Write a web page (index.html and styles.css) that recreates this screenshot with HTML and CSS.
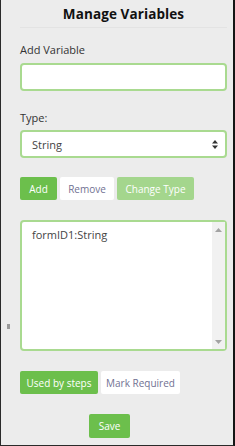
FILE: index.html
```html
<!DOCTYPE html>
<html>
<head>
<meta charset="utf-8">
<link rel="stylesheet" href="styles.css">
</head>
<body>
<div class="frame">
  <h1 class="title">Manage Variables</h1>
  <div class="sep"></div>
  <label class="label lbl-add">Add Variable</label>
  <div class="input"></div>
  <label class="label lbl-type">Type:</label>
  <div class="select">
    <span>String</span>
    <svg class="updown" width="6" height="9" viewBox="0 0 6 9"><path d="M3 0 L6 3.5 H0 Z M3 9 L6 5.5 H0 Z" fill="#333"/></svg>
  </div>
  <div class="btnrow row1">
    <span class="btn green">Add</span>
    <span class="btn white">Remove</span>
    <span class="btn pale">Change Type</span>
  </div>
  <div class="listbox">
    <div class="listtext">formID1:String</div>
    <div class="scroll">
      <svg width="7" height="4" viewBox="0 0 7 4"><path d="M3.5 0 L7 4 H0 Z" fill="#a3a3a3"/></svg>
      <svg width="7" height="4" viewBox="0 0 7 4"><path d="M0 0 H7 L3.5 4 Z" fill="#a3a3a3"/></svg>
    </div>
  </div>
  <div class="btnrow row2">
    <span class="btn green">Used by steps</span>
    <span class="btn white">Mark Required</span>
  </div>
  <div class="saverow">
    <span class="btn green save">Save</span>
  </div>
  <span class="grip"></span>
</div>
</body>
</html>
```
FILE: styles.css
```css
* { box-sizing: border-box; }
html, body { margin: 0; padding: 0; background: #ececec; }
.frame {
  position: relative;
  width: 235px;
  height: 446px;
  background: #ececec;
  border-left: 1px solid #2a2a2a;
  border-right: 2px solid #151515;
  border-bottom: 1px solid #2a2a2a;
  padding: 0 6px 0 19px;
  font-family: "Open Sans", "Liberation Sans", sans-serif;
  color: #333;
  display: flex;
  flex-direction: column;
}
.title {
  margin: 5px 0 0 0;
  height: 18px;
  line-height: 18px;
  font-size: 13.5px;
  font-weight: 700;
  text-align: center;
  color: #111;
  letter-spacing: 0.1px;
}
.sep {
  margin-top: 4px;
  height: 1px;
  background: #d3d3d3;
  border-bottom: 1px solid #e3e3e3;
}
.label {
  font-size: 11px;
  line-height: 14px;
  color: #333;
  display: block;
}
.lbl-add { margin-top: 15px; }
.input {
  margin-top: 6px;
  height: 28px;
  background: #fff;
  border: 2px solid #a9da90;
  border-radius: 4px;
}
.lbl-type { margin-top: 20px; }
.select {
  margin-top: 5px;
  height: 28px;
  background: #fff;
  border: 2px solid #a9da90;
  border-radius: 4px;
  display: flex;
  align-items: center;
  justify-content: space-between;
  padding: 0 7px 0 10px;
  font-size: 11px;
  color: #444;
}
.btnrow { display: flex; gap: 3px; }
.row1 { margin-top: 19px; }
.btn {
  height: 23px;
  display: flex;
  align-items: center;
  justify-content: center;
  font-size: 10px;
  border-radius: 2px;
  padding: 0 6px;
  white-space: nowrap;
}
.green { background: #6cbf4c; color: #fff; }
.white { background: #fff; color: #717192; }
.pale { background: #a4d68d; color: #fff; }
.row1 .green { width: 37px; }
.row1 .white { width: 54px; }
.row1 .pale { width: 77px; }
.listbox {
  margin-top: 20px;
  height: 131px;
  background: #fff;
  border: 2px solid #a9da90;
  border-radius: 4px;
  display: flex;
}
.listtext {
  flex: 1;
  padding: 5px 0 0 10px;
  font-size: 11px;
  color: #444;
}
.scroll {
  width: 13px;
  background: #f1f1f1;
  display: flex;
  flex-direction: column;
  justify-content: space-between;
  align-items: center;
  padding: 6px 0 5px 0;
}
.scroll svg { display: block; }
.row2 { margin-top: 20px; }
.row2 .green { width: 78px; }
.row2 .white { width: 79px; }
.saverow { margin-top: 20px; padding-left: 69px; display: flex; }
.save { width: 41px; height: 24px; }
.grip {
  position: absolute;
  left: 6px;
  top: 324px;
  width: 3px;
  height: 5px;
  background: #9a9a9a;
}
```
